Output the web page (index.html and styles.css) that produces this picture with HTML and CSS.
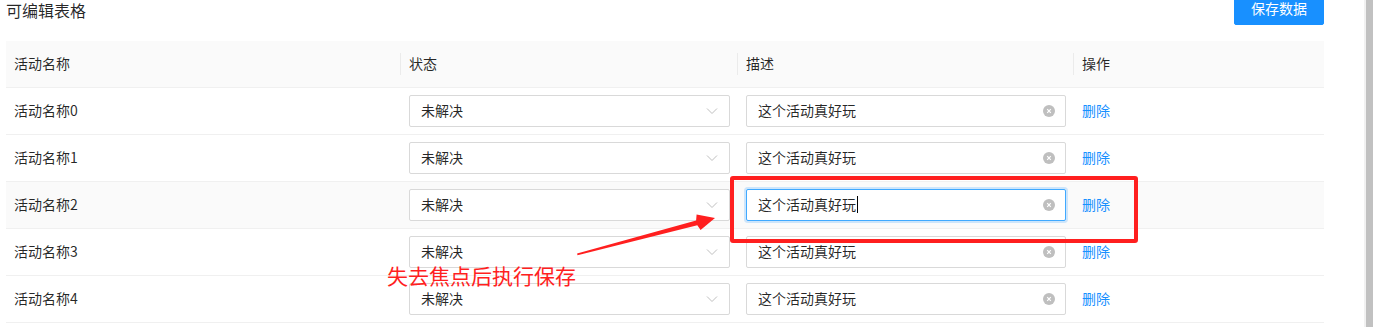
FILE: index.html
```html
<!DOCTYPE html>
<html lang="zh-CN">
<head>
    <meta charset="UTF-8">
    <meta name="viewport" content="width=device-width, initial-scale=1.0">
    <title>可编辑表格</title>
    <link rel="stylesheet" href="styles.css">
</head>
<body>
    <div class="page">
        <div class="main">
            <div class="toolbar">
                <div class="title">可编辑表格</div>
                <button class="btn-primary">保存数据</button>
            </div>

            <table class="table">
                <colgroup>
                    <col class="col-name">
                    <col class="col-status">
                    <col class="col-desc">
                    <col class="col-action">
                </colgroup>
                <thead>
                    <tr>
                        <th>活动名称</th>
                        <th>状态</th>
                        <th>描述</th>
                        <th>操作</th>
                    </tr>
                </thead>
                <tbody>
                    <tr>
                        <td>活动名称0</td>
                        <td>
                            <div class="select">
                                <span class="select-text">未解决</span>
                                <svg class="chevron" width="12" height="12" viewBox="0 0 12 12"><path d="M1 3.5 6 8.5 11 3.5" fill="none" stroke="#bfbfbf" stroke-width="1"/></svg>
                            </div>
                        </td>
                        <td>
                            <div class="field">
                                <span class="field-text">这个活动真好玩</span>
                                <svg class="clear" width="12" height="12" viewBox="0 0 12 12"><circle cx="6" cy="6" r="6" fill="#bfbfbf"/><path d="M4.2 4.2 7.8 7.8M7.8 4.2 4.2 7.8" stroke="#fff" stroke-width="1.2"/></svg>
                            </div>
                        </td>
                        <td><a class="link" href="#">删除</a></td>
                    </tr>
                    <tr>
                        <td>活动名称1</td>
                        <td>
                            <div class="select">
                                <span class="select-text">未解决</span>
                                <svg class="chevron" width="12" height="12" viewBox="0 0 12 12"><path d="M1 3.5 6 8.5 11 3.5" fill="none" stroke="#bfbfbf" stroke-width="1"/></svg>
                            </div>
                        </td>
                        <td>
                            <div class="field">
                                <span class="field-text">这个活动真好玩</span>
                                <svg class="clear" width="12" height="12" viewBox="0 0 12 12"><circle cx="6" cy="6" r="6" fill="#bfbfbf"/><path d="M4.2 4.2 7.8 7.8M7.8 4.2 4.2 7.8" stroke="#fff" stroke-width="1.2"/></svg>
                            </div>
                        </td>
                        <td><a class="link" href="#">删除</a></td>
                    </tr>
                    <tr class="is-hover">
                        <td>活动名称2</td>
                        <td>
                            <div class="select">
                                <span class="select-text">未解决</span>
                                <svg class="chevron" width="12" height="12" viewBox="0 0 12 12"><path d="M1 3.5 6 8.5 11 3.5" fill="none" stroke="#bfbfbf" stroke-width="1"/></svg>
                            </div>
                        </td>
                        <td>
                            <div class="field is-focused">
                                <span class="field-text">这个活动真好玩<span class="caret"></span></span>
                                <svg class="clear" width="12" height="12" viewBox="0 0 12 12"><circle cx="6" cy="6" r="6" fill="#bfbfbf"/><path d="M4.2 4.2 7.8 7.8M7.8 4.2 4.2 7.8" stroke="#fff" stroke-width="1.2"/></svg>
                            </div>
                        </td>
                        <td><a class="link" href="#">删除</a></td>
                    </tr>
                    <tr>
                        <td>活动名称3</td>
                        <td>
                            <div class="select">
                                <span class="select-text">未解决</span>
                                <svg class="chevron" width="12" height="12" viewBox="0 0 12 12"><path d="M1 3.5 6 8.5 11 3.5" fill="none" stroke="#bfbfbf" stroke-width="1"/></svg>
                            </div>
                        </td>
                        <td>
                            <div class="field">
                                <span class="field-text">这个活动真好玩</span>
                                <svg class="clear" width="12" height="12" viewBox="0 0 12 12"><circle cx="6" cy="6" r="6" fill="#bfbfbf"/><path d="M4.2 4.2 7.8 7.8M7.8 4.2 4.2 7.8" stroke="#fff" stroke-width="1.2"/></svg>
                            </div>
                        </td>
                        <td><a class="link" href="#">删除</a></td>
                    </tr>
                    <tr>
                        <td>活动名称4</td>
                        <td>
                            <div class="select">
                                <span class="select-text">未解决</span>
                                <svg class="chevron" width="12" height="12" viewBox="0 0 12 12"><path d="M1 3.5 6 8.5 11 3.5" fill="none" stroke="#bfbfbf" stroke-width="1"/></svg>
                            </div>
                        </td>
                        <td>
                            <div class="field">
                                <span class="field-text">这个活动真好玩</span>
                                <svg class="clear" width="12" height="12" viewBox="0 0 12 12"><circle cx="6" cy="6" r="6" fill="#bfbfbf"/><path d="M4.2 4.2 7.8 7.8M7.8 4.2 4.2 7.8" stroke="#fff" stroke-width="1.2"/></svg>
                            </div>
                        </td>
                        <td><a class="link" href="#">删除</a></td>
                    </tr>
                </tbody>
            </table>

            <!-- screenshot annotation -->
            <div class="mark-box"></div>
            <svg class="mark-arrow" width="1364" height="327" viewBox="0 0 1364 327">
                <polygon points="577.1,253.4 696.1,220.4 696.6,214.6 715,218 700.6,230 697.3,225.2 577.5,255.2" fill="#ff1f1f"/>
            </svg>
            <div class="mark-text">失去焦点后执行保存</div>
        </div>

        <div class="scrollbar">
            <div class="scrollbar-thumb"></div>
        </div>
    </div>
</body>
</html>
```

FILE: styles.css
```css
body {
    margin: 0;
    font-family: "Noto Sans CJK SC", "Noto Sans", sans-serif;
    font-size: 14px;
    color: rgba(0, 0, 0, 0.85);
    background: #fff;
    overflow: hidden;
}
.page {
    display: flex;
    height: 327px;
}
.main {
    position: relative;
    flex: 1;
    padding: 0 40px 0 6px;
}
.toolbar {
    display: flex;
    align-items: center;
    justify-content: space-between;
    height: 32px;
    margin-top: -7px;
    margin-bottom: 16px;
}
.title {
    padding-top: 2px;
    font-size: 16px;
    line-height: 20px;
    color: rgba(0, 0, 0, 0.85);
}
.btn-primary {
    height: 32px;
    padding: 0 16px 2px;
    border: 1px solid #1890ff;
    border-radius: 2px;
    background: #1890ff;
    color: #fff;
    font-family: inherit;
    font-size: 14px;
    line-height: 22px;
}
.table {
    width: 1318px;
    border-collapse: collapse;
    table-layout: fixed;
}
.col-name { width: 395px; }
.col-status { width: 337px; }
.col-desc { width: 336px; }
.col-action { width: 250px; }
.table th {
    position: relative;
    padding: 11px 8px 13px;
    background: #fafafa;
    border-bottom: 1px solid #f0f0f0;
    text-align: left;
    font-weight: normal;
    line-height: 22px;
    color: rgba(0, 0, 0, 0.85);
}
.table th:not(:last-child)::before {
    content: "";
    position: absolute;
    top: 12px;
    right: 0;
    width: 1px;
    height: 22px;
    background: rgba(0, 0, 0, 0.06);
}
.table td {
    padding: 7px 8px;
    border-bottom: 1px solid #f0f0f0;
    line-height: 22px;
}
.table td:first-child,
.table td:last-child {
    padding: 6px 8px 8px;
}
.table tr.is-hover td {
    background: #fafafa;
}
.select,
.field {
    display: flex;
    align-items: center;
    box-sizing: border-box;
    height: 32px;
    padding: 0 11px;
    border: 1px solid #d9d9d9;
    border-radius: 2px;
    background: #fff;
}
.select-text,
.field-text {
    flex: 1;
    padding-bottom: 2px;
    line-height: 22px;
    white-space: nowrap;
}
.chevron {
    display: block;
}
.clear {
    display: block;
    margin-right: -1px;
}
.field.is-focused {
    border-color: #40a9ff;
    box-shadow: 0 0 0 2px rgba(24, 144, 255, 0.2);
}
.caret {
    display: inline-block;
    width: 1px;
    height: 17px;
    margin-left: 1px;
    vertical-align: -3px;
    background: #000;
}
.link {
    color: #1890ff;
    text-decoration: none;
}
.mark-box {
    position: absolute;
    left: 730px;
    top: 176px;
    width: 400px;
    height: 59px;
    border: 4px solid #ff1f1f;
    border-radius: 3px;
}
.mark-arrow {
    position: absolute;
    left: 0;
    top: 0;
    pointer-events: none;
}
.mark-text {
    position: absolute;
    left: 387px;
    top: 263px;
    font-size: 21px;
    line-height: 24px;
    color: #ff1f1f;
    white-space: nowrap;
}
.scrollbar {
    width: 7px;
    border-left: 2px solid #f1f1f1;
    background: #f1f1f1;
}
.scrollbar-thumb {
    height: 100%;
    background: #c1c1c1;
}
```
